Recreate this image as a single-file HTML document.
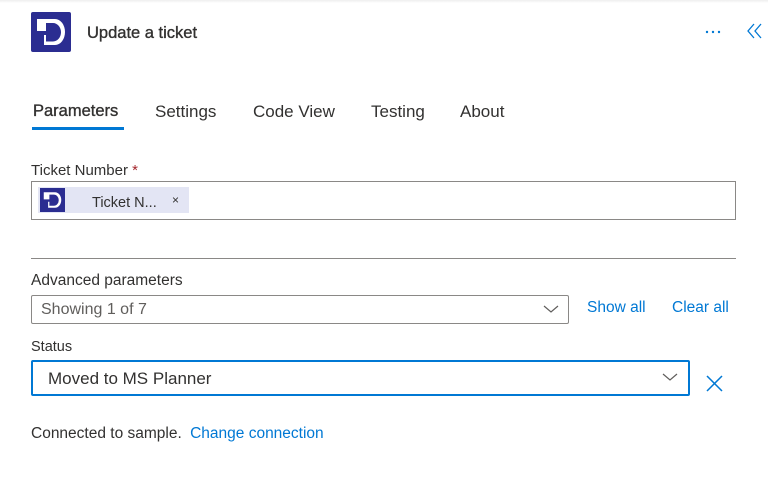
<!DOCTYPE html>
<html><head><meta charset="utf-8"><style>
*{margin:0;padding:0;box-sizing:border-box}
body{width:768px;height:484px;background:#fff;font-family:"Liberation Sans",sans-serif;color:#323130;position:relative;overflow:hidden}
.a{position:absolute;white-space:nowrap}
.topline{position:absolute;left:0;top:0;width:768px;height:3px;background:linear-gradient(#eee,#fff)}
.link{color:#0078d4;font-size:15.5px}
.sb{-webkit-text-stroke:0.35px #323130}
</style></head><body>
<div class="topline"></div>
<svg class="a" style="left:31px;top:12px" width="40" height="40" viewBox="0 0 40 40">
<rect width="40" height="40" rx="2" fill="#2b2d91"/>
<path fill-rule="evenodd" d="M6 7H24A10 13 0 0 1 24 33H13V23H6Z M6 19H15V11H22A8 9.25 0 0 1 22 29.5H15V23H6Z" fill="#fff"/>
</svg>
<div class="a sb" style="left:87px;top:24px;font-size:16.5px;color:#323130">Update a ticket</div>
<svg class="a" style="left:704px;top:29px" width="18" height="6"><circle cx="3" cy="3" r="1.2" fill="#0078d4"/><circle cx="9" cy="3" r="1.2" fill="#0078d4"/><circle cx="15" cy="3" r="1.2" fill="#0078d4"/></svg>
<svg class="a" style="left:746px;top:22px" width="18" height="18"><path d="M8 2L2 9l6 7M15 2L9 9l6 7" fill="none" stroke="#0078d4" stroke-width="1.3"/></svg>

<div class="a sb" style="left:33px;top:102px;font-size:16.5px;color:#323130">Parameters</div>
<div class="a" style="left:32px;top:127px;width:92px;height:3px;background:#0078d4"></div>
<div class="a" style="left:155px;top:102px;font-size:17px">Settings</div>
<div class="a" style="left:253px;top:102px;font-size:17px">Code View</div>
<div class="a" style="left:371px;top:102px;font-size:17px">Testing</div>
<div class="a" style="left:460px;top:102px;font-size:17px">About</div>

<div class="a" style="left:31px;top:162px;font-size:15px">Ticket Number <span style="color:#a4262c">*</span></div>
<div class="a" style="left:31px;top:181px;width:705px;height:39px;border:1px solid #8a8886"></div>
<div class="a" style="left:38px;top:187px;width:151px;height:26px;background:#e3e5f4"></div>
<svg class="a" style="left:40px;top:188px" width="25" height="24" viewBox="0 0 40 40" preserveAspectRatio="none"><rect width="40" height="40" fill="#2b2d91"/><path fill-rule="evenodd" d="M6 7H24A10 13 0 0 1 24 33H13V23H6Z M6 19H15V11H22A8 9.25 0 0 1 22 29.5H15V23H6Z" fill="#fff"/></svg>
<div class="a" style="left:92px;top:195px;font-size:14.5px">Ticket N...</div>
<div class="a" style="left:172px;top:193px;font-size:12px">×</div>

<div class="a" style="left:31px;top:258px;width:705px;height:1px;background:#8a8886"></div>

<div class="a" style="left:31px;top:272px;font-size:15.5px">Advanced parameters</div>
<div class="a" style="left:31px;top:295px;width:538px;height:29px;border:1px solid #8a8886;border-radius:2px"></div>
<div class="a" style="left:41px;top:301px;font-size:16px;color:#605e5c">Showing 1 of 7</div>
<svg class="a" style="left:543px;top:304px" width="16" height="10"><path d="M1 2l7 6 7-6" fill="none" stroke="#605e5c" stroke-width="1.2"/></svg>
<div class="a link" style="left:587px;top:299px">Show all</div>
<div class="a link" style="left:672px;top:299px">Clear all</div>

<div class="a" style="left:31px;top:339px;font-size:14.5px">Status</div>
<div class="a" style="left:31px;top:360px;width:659px;height:36px;border:2px solid #0078d4;border-radius:2px"></div>
<div class="a" style="left:48px;top:369px;font-size:17px">Moved to MS Planner</div>
<svg class="a" style="left:662px;top:372px" width="16" height="10"><path d="M1 2l7 6 7-6" fill="none" stroke="#605e5c" stroke-width="1.2"/></svg>
<svg class="a" style="left:706px;top:375px" width="17" height="17"><path d="M1 1l15 15M16 1L1 16" stroke="#0078d4" stroke-width="1.5"/></svg>

<div class="a" style="left:31px;top:425px;font-size:15.5px">Connected to sample. <span class="link" style="margin-left:4px">Change connection</span></div>
</body></html>
